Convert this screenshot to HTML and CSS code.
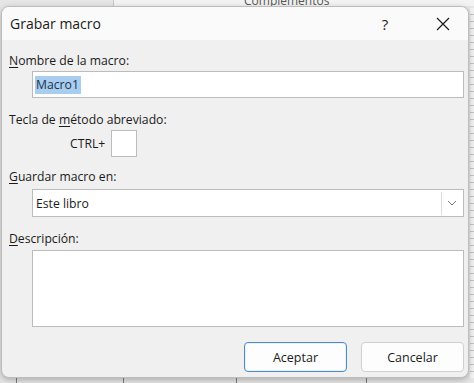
FILE: index.html
```html
<!DOCTYPE html>
<html lang="es">
<head>
    <meta charset="UTF-8">
    <meta name="viewport" content="width=device-width, initial-scale=1.0">
    <title>Grabar macro</title>
    <link rel="stylesheet" href="styles.css">
</head>
<body>

<!-- Excel ribbon behind the dialog -->
<div class="ribbon-peek"><span>Complementos</span></div>

<div class="dialog">
    <div class="titlebar">
        <span class="title">Grabar macro</span>
        <span class="help">?</span>
        <span class="close">
            <svg width="14" height="14" viewBox="0 0 14 14">
                <path d="M1 1 L13 13 M13 1 L1 13" stroke="#1b1b1b" stroke-width="1.2" fill="none"/>
            </svg>
        </span>
    </div>

    <div class="content">
        <div class="label"><u>N</u>ombre de la macro:</div>
        <div class="field"><span class="selected">Macro1</span></div>

        <div class="label gap"><span>Tecla de <u>m</u>étodo abreviado:</span></div>
        <div class="shortcut">
            <span>CTRL+</span>
            <div class="key"></div>
        </div>

        <div class="label gap-sm"><u>G</u>uardar macro en:</div>
        <div class="field combo">
            <span>Este libro</span>
            <div class="arrow">
                <svg width="10" height="6" viewBox="0 0 10 6">
                    <path d="M1 1 L5 5 L9 1" stroke="#7a7a7a" stroke-width="1" fill="none"/>
                </svg>
            </div>
        </div>

        <div class="label gap"><u>D</u>escripción:</div>
        <div class="field memo"></div>

        <div class="actions">
            <button class="btn btn-default">Aceptar</button>
            <button class="btn">Cancelar</button>
        </div>
    </div>
</div>

</body>
</html>
```

FILE: styles.css
```css
/* Page is the Excel window seen behind the dialog */
body {
    margin: 0;
    width: 474px;
    height: 383px;
    overflow: hidden;
    font-family: "Open Sans", "Noto Sans", sans-serif;
    color: #1b1b1b;
    background-color: #e6e6e6;
    background-image:
        linear-gradient(to right, #7d7d7d 1px, transparent 1px),
        linear-gradient(to right, #7d7d7d 1px, transparent 1px),
        linear-gradient(to right, #7d7d7d 1px, transparent 1px),
        linear-gradient(to right, #7d7d7d 1px, transparent 1px),
        repeating-linear-gradient(to bottom, #f3f3f3 0, #f3f3f3 6px, #c4c4c4 6px, #c4c4c4 7px);
    background-size: 1px 6px, 1px 6px, 1px 6px, 1px 6px, 4px 370px;
    background-repeat: no-repeat;
    background-position: 16px 378px, 123px 378px, 236px 378px, 366px 378px, 470px 8px;
}

.ribbon-peek {
    height: 6px;
    overflow: hidden;
    background: #f3f3f3;
    border-left: 1px solid #c9c9c9;
    margin-left: 113px;
    padding-left: 130px;
}

.ribbon-peek span {
    display: block;
    margin-top: -6px;
    font-size: 12px;
    line-height: 14px;
    color: #555;
}

.dialog {
    box-sizing: border-box;
    width: 468px;
    height: 372px;
    margin-left: 1px;
    border: 1px solid #bdbdbd;
    border-radius: 8px;
    background: #f0f0f0;
    overflow: hidden;
    box-shadow: 0 2px 6px rgba(0, 0, 0, 0.25);
}

.titlebar {
    height: 33px;
    display: flex;
    align-items: center;
    background: #fafafa;
    padding-left: 8px;
}

.title {
    font-size: 14px;
    flex: 1;
}

.help {
    font-size: 15px;
    width: 20px;
    text-align: center;
    margin-right: 41px;
}

.close {
    display: flex;
    margin-right: 18px;
}

.content {
    padding: 12px 0 0 7px;
    font-size: 12.2px;
}

.label {
    height: 18px;
    line-height: 18px;
}

.label u {
    text-decoration-thickness: 1px;
    text-underline-offset: 2px;
}

.gap {
    margin-top: 13px;
}

.gap-sm {
    margin-top: 11px;
}

.field {
    box-sizing: border-box;
    width: 432px;
    height: 27px;
    margin: 1px 0 0 23px;
    background: #fff;
    border: 1px solid #bcbcbc;
    display: flex;
    align-items: center;
    padding-left: 2px;
}

.selected {
    background: #a8cdef;
    color: #1a3350;
    line-height: 18px;
    padding: 0 2px 0 1px;
}

.shortcut {
    display: flex;
    align-items: center;
    margin: 1px 0 0 61px;
    gap: 6px;
}

.key {
    box-sizing: border-box;
    width: 26px;
    height: 27px;
    background: #fff;
    border: 1px solid #bcbcbc;
}

.combo {
    height: 28px;
    margin-top: 3px;
    padding-left: 3px;
    justify-content: space-between;
}

.arrow {
    box-sizing: border-box;
    width: 21px;
    height: 23px;
    margin-right: 1px;
    border-left: 1px solid #dcdcdc;
    display: flex;
    align-items: center;
    justify-content: center;
}

.memo {
    height: 77px;
    margin-top: 2px;
}

.actions {
    display: flex;
    justify-content: flex-end;
    gap: 14px;
    width: 455px;
    margin-top: 15px;
}

.btn {
    box-sizing: border-box;
    width: 103px;
    height: 30px;
    font-family: inherit;
    font-size: 12.5px;
    color: #1b1b1b;
    background: #fdfdfd;
    border: 1px solid #d0d0d0;
    border-radius: 4px;
    padding: 0;
}

.btn-default {
    border-color: #4a8cc7;
    box-shadow: inset 0 0 0 1px #e8f1fa;
}
```
